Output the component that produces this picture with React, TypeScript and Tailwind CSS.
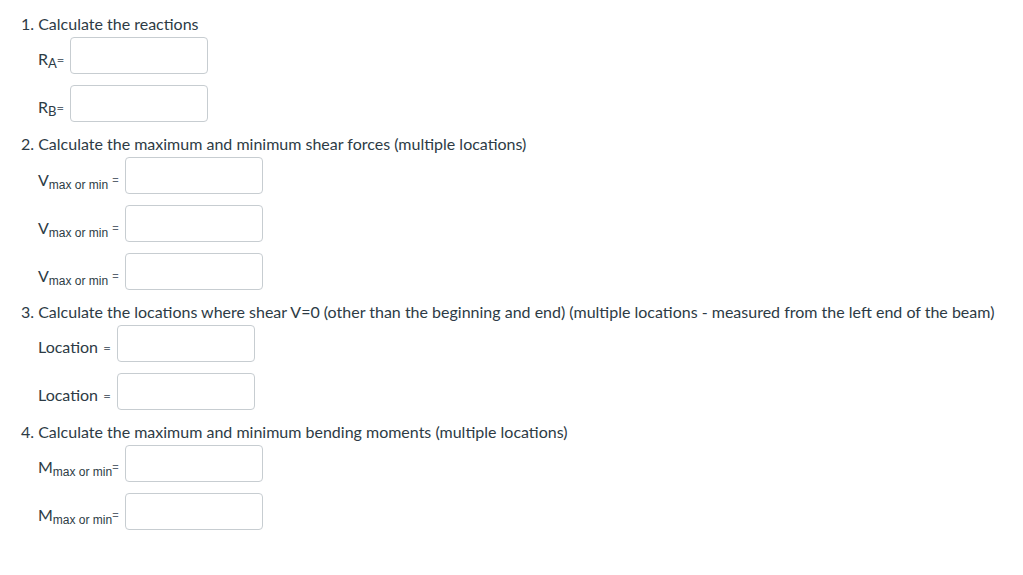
const heading = "leading-6 text-base";

function Box() {
	return <input type="text" className="ml-[6px] h-[37px] w-[138px] rounded-[4px] border border-[#c7cdd1] bg-white outline-none" />;
}

function Sub({ children }: { children: React.ReactNode }) {
	return <sub className="relative top-[3px] align-baseline font-['Liberation_Sans',sans-serif] text-[12px]">{children}</sub>;
}

function Row({ first, children }: { first?: boolean; children: React.ReactNode }) {
	return (
		<div className={`flex items-center pl-[17px] ${first ? "mt-px" : "mt-[11px]"}`}>
			<span className="whitespace-nowrap pt-2 text-base leading-6">{children}</span>
			<Box />
		</div>
	);
}

function Eq() {
	return <span className="ml-1 align-[2px] font-['Liberation_Sans',sans-serif] text-[11px] text-[#5a6570]">=</span>;
}

export default function App() {
	return (
		<div className="min-h-screen bg-white px-[21px] pt-3 font-['Lato',sans-serif] text-[#2d3b45]">
			<p className={heading}>1. Calculate the reactions</p>
			<Row first>
				R<sub className="relative top-[3px] align-baseline text-[13px]">A</sub>
				<span className="text-[13px] text-[#5a6570]">=</span>
			</Row>
			<Row>
				R<sub className="relative top-[3px] align-baseline text-[13px]">B</sub>
				<span className="text-[13px] text-[#5a6570]">=</span>
			</Row>

			<p className={`${heading} mt-[10px]`}>2. Calculate the maximum and minimum shear forces (multiple locations)</p>
			<Row first>
				V<Sub>max or min</Sub>
				<Eq />
			</Row>
			<Row>
				V<Sub>max or min</Sub>
				<Eq />
			</Row>
			<Row>
				V<Sub>max or min</Sub>
				<Eq />
			</Row>

			<p className={`${heading} mt-[10px]`}>
				3. Calculate the locations where shear V=0 (other than the beginning and end) (multiple locations - measured from the left end of the beam)
			</p>
			<Row first>
				Location <span className="ml-px text-[13px] text-[#5a6570]">=</span>
			</Row>
			<Row>
				Location <span className="ml-px text-[13px] text-[#5a6570]">=</span>
			</Row>

			<p className={`${heading} mt-[10px]`}>4. Calculate the maximum and minimum bending moments (multiple locations)</p>
			<Row first>
				M<Sub>max or min</Sub>
				<span className="relative top-[-2px] font-['Liberation_Sans',sans-serif] text-[11px] text-[#5a6570]">=</span>
			</Row>
			<Row>
				M<Sub>max or min</Sub>
				<span className="relative top-[-2px] font-['Liberation_Sans',sans-serif] text-[11px] text-[#5a6570]">=</span>
			</Row>
		</div>
	);
}
